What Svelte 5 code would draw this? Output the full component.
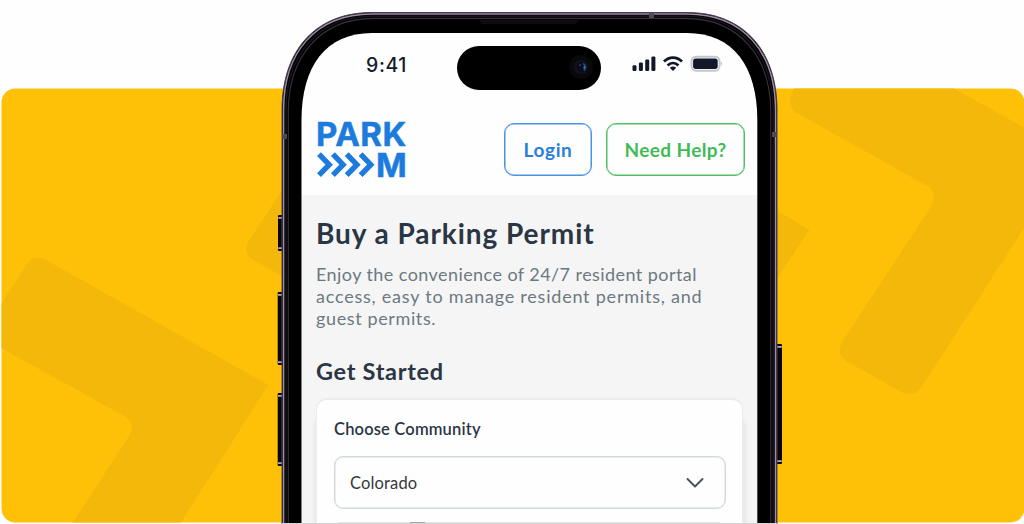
<script>
  const chevrons = [0, 13.9, 27.7, 41.6];
  const outer = 'M282 530V110C282 52 314 12.5 372 12.5H687C745 12.5 777 52 777 110V530Z';
  const rimLight = 'M283.6 530V110C283.6 53 315 14 372 14H687C744 14 775.5 53 775.5 110V530';
  const rimDark = 'M286 530V111C286 56 317 16.2 373 16.2H686C742 16.2 773.2 56 773.2 111V530';
  const rimInner = 'M288.3 530V112C288.3 58 319 18.4 374 18.4H685C740 18.4 770.8 58 770.8 112V530';
  const glass = 'M301.5 530V120C301.5 66 326 33 372 33H687C733 33 757.3 66 757.3 120V530Z';
  const buttons = [
    { x: 278, y: 215, h: 36 },
    { x: 277.7, y: 292, h: 73 },
    { x: 277.7, y: 393, h: 73 },
    { x: 776, y: 344, h: 120 }
  ];
</script>

<main class="hero">
  <svg class="scene" viewBox="0 0 1024 524" aria-hidden="true">
    <defs>
      <clipPath id="panel"><rect x="1.5" y="88.5" width="1023" height="434" rx="14" /></clipPath>
    </defs>
    <rect x="1.5" y="88.5" width="1023" height="434" rx="14" fill="#fec108" />
    <g clip-path="url(#panel)" fill="#f4b80a">
      <path d="M-10 321L27 264Q34 254 46 260L268.500 385L180 524H72L129 436Q136 424 126 417L-10 342Z" />
      <path d="M300 163L248 242Q243 252 252 259L320 298V163ZM740 189L809.500 230L740 334Z" />
      <path d="M796 86Q785 101 795 112L929 187Q937 194 932 205L842 342Q836 354 846 361L903 393Q914 397 921 388L1030 219V131L950 86Z" />
    </g>
    {#each buttons as b}
      <rect x={b.x} y={b.y} width="6" height={b.h} rx="1" fill="#08060b" />
      <path d="M{b.x + 0.3} {b.y + 2.8}h5.500M{b.x + 0.3} {b.y + b.h - 2.800}h5.500" stroke="#b3a3bb" stroke-width="1.800" />
    {/each}
    <path d={outer} fill="#000" />
    <g fill="none">
      <path d={outer} stroke="#4a4150" stroke-width="1" />
      <path d={rimLight} stroke="#9d8ba6" stroke-width="1.500" />
      <path d={rimDark} stroke="#17131a" stroke-width="1.500" />
      <path d={rimInner} stroke="#39323e" stroke-width="1.100" />
    </g>
    <path d="M282 134h5v5h-5zM772 132h5v5h-5zM649 12h5v6h-5z" fill="#514a56" />
    <path d="M479 20H579L576 24H482Z" fill="#0d0d0e" />
    <path d={glass} fill="#fefefe" />
  </svg>

  <section class="screen">
    <div class="status">
      <span class="time">9:41</span>
      <div class="island">
        <svg width="30" height="30" viewBox="0 0 30 30">
          <circle cx="15" cy="15" r="12" fill="#09090b" />
          <circle cx="15" cy="15" r="7.300" fill="#10111a" />
          <circle cx="15.500" cy="15" r="4.800" fill="#080b1b" />
          <path d="M17 11.500q4 2.500 1 7" stroke="#234b87" stroke-width="2" fill="none" />
          <circle cx="14" cy="13" r="1" fill="#33406a" />
          <circle cx="18.300" cy="15.500" r="1" fill="#4f7fc4" />
        </svg>
      </div>
      <svg class="indicators" width="92" height="18" viewBox="631 55 92 18">
        <g fill="#12172a">
          <rect x="632.500" y="65.300" width="4" height="5.700" rx="1.200" />
          <rect x="638.900" y="62.500" width="4" height="8.500" rx="1.200" />
          <rect x="645.200" y="59.600" width="4" height="11.400" rx="1.200" />
          <rect x="651.400" y="56.600" width="4" height="14.400" rx="1.200" />
        </g>
        <g fill="none" stroke="#12172a" stroke-width="2.800">
          <path d="M664 61.600C669.200 56.300 676.800 56.300 682 61.600" />
          <path d="M667.600 65.500C670.800 62.300 675.200 62.300 678.400 65.500" />
        </g>
        <path d="M669.800 67.700Q673 65.300 676.200 67.700L673 71Z" fill="#12172a" />
        <rect x="691.500" y="56.700" width="28" height="14" rx="4.500" fill="none" stroke="#c3c6ca" stroke-width="1.900" />
        <rect x="693.100" y="58.500" width="24.600" height="10.400" rx="2.600" fill="#12172a" />
        <path d="M720.800 61.200Q723.200 63.500 720.800 66Z" fill="#b9bbc0" />
      </svg>
    </div>

    <header class="bar">
      <div class="logo">
        <span>PARK</span>
        <div class="logo-row">
          <svg width="61" height="26" viewBox="316 152 61 26">
            {#each chevrons as dx}
              <path d="M{319 + dx} 154.200L{329.200 + dx} 164.700L{319 + dx} 175.200" fill="none" stroke="#1c7bdd" stroke-width="5.400" />
            {/each}
          </svg>
          <span>M</span>
        </div>
      </div>
      <button class="btn login"><span>Login</span></button>
      <button class="btn help"><span>Need Help?</span></button>
    </header>

    <div class="content">
      <h1><span>Buy a Parking Permit</span></h1>
      <p>
        <span class="l1">Enjoy the convenience of 24/7 resident portal</span>
        <span class="l2">access, easy to manage resident permits, and</span>
        <span class="l3">guest permits.</span>
      </p>
      <h2><span>Get Started</span></h2>
      <div class="card">
        <div class="label"><span>Choose Community</span></div>
        <div class="select">
          <span>Colorado</span>
          <svg width="18" height="12" viewBox="0 0 18 12"><path d="M1.500 2L9 9.500L16.500 2" fill="none" stroke="#46525f" stroke-width="1.900" stroke-linecap="round" stroke-linejoin="round" /></svg>
        </div>
        <div class="next"><i></i></div>
      </div>
    </div>
  </section>
  <div class="base"></div>
</main>

<style>
  :global(body) { margin: 0; background: #fefefe; overflow: hidden; }
  .hero {
    position: relative;
    width: 1024px;
    height: 524px;
    overflow: hidden;
    font-family: Lato, "Open Sans", sans-serif;
    color: #2b3644;
  }
  .scene { position: absolute; inset: 0; width: 1024px; height: 524px; }
  .screen {
    position: relative;
    box-sizing: border-box;
    width: 455px;
    height: 524px;
    margin-left: 302px;
    padding-top: 33px;
    display: flex;
    flex-direction: column;
    overflow: hidden;
    white-space: nowrap;
  }
  .status { height: 70px; display: flex; align-items: flex-start; flex: none; }
  .time {
    width: 90px;
    margin: 19px 0 0 64px;
    font: 500 19.500px/26px Inter, sans-serif;
    letter-spacing: 0.600px;
    color: #161b2b;
  }
  .island {
    width: 144px;
    height: 44px;
    margin: 13px 30px 0 1px;
    border-radius: 22px;
    background: #000;
    display: flex;
    align-items: center;
    justify-content: flex-end;
    box-sizing: border-box;
    padding: 0 5px 2px 0;
  }
  .indicators { margin-top: 22px; flex: none; }
  .bar {
    height: 92px;
    flex: none;
    display: flex;
    align-items: flex-start;
    padding: 19px 12px 0 14px;
    box-sizing: border-box;
  }
  .logo {
    flex: 1;
    font: 700 33px/24px Inter, sans-serif;
    color: #1c7bdd;
    -webkit-text-stroke: 0.500px #1c7bdd;
  }
  .logo > span { display: block; height: 30px; letter-spacing: 0.500px; }
  .logo-row { display: flex; align-items: center; }
  .logo-row span { margin-left: -1px; }
  .btn {
    height: 53px;
    margin-top: 1px;
    border: 1px solid;
    border-radius: 10px;
    background: transparent;
    padding: 0;
    font: 700 19px/24px Lato, "Open Sans", sans-serif;
  }
  .login { width: 88px; color: #2a7fdc; border-color: #4a93e2; box-shadow: inset 0 0 0 0.500px #4a93e2; margin-right: 14px; letter-spacing: 0.600px; }
  .help { width: 139px; color: #42ba58; border-color: #52bf66; box-shadow: inset 0 0 0 0.500px #52bf66; letter-spacing: 0.400px; }
  .content { flex: 1; background: #f5f5f6; padding: 21px 14px 0; }
  h1 { margin: 0; font-size: 28px; line-height: 34px; font-weight: 700; letter-spacing: 0.930px; }
  p { margin: 13px 0 0; font-size: 18px; line-height: 22px; color: #6d7980; }
  p span { display: block; width: max-content; }
  .l1 { letter-spacing: 0.430px; }
  .l2 { letter-spacing: 0.780px; }
  .l3 { letter-spacing: 0.620px; }
  h2 { margin: 28px 0 0; font-size: 23.500px; line-height: 28px; font-weight: 700; letter-spacing: 0.700px; }
  .card {
    height: 150px;
    margin-top: 13px;
    padding: 18px 17px 0 16px;
    border: 1px solid #ebecee;
    border-width: 2px 1px 0;
    border-radius: 11px 11px 0 0;
    background: #fefefe;
    box-shadow: -4px 17px 3px -1px #eaebed, 5px 17px 3px -1px #eaebed;
  }
  .label { font-size: 16.500px; line-height: 22px; font-weight: 600; margin-left: 1px; letter-spacing: 0.170px; }
  .select {
    height: 53px;
    box-sizing: border-box;
    margin: 16px -1px 0 1px;
    padding: 0 21px 0 15px;
    border: 1px solid #d3dada;
    box-shadow: inset 0 0 0 0.500px #d3dada;
    border-radius: 9px;
    display: flex;
    align-items: center;
    justify-content: space-between;
    font-size: 16.500px;
    letter-spacing: 0.150px;
    color: #35383f;
  }
  .select span { padding-top: 1px; }
  .next { height: 2px; margin: 13px 5px 0; background: #dfe6e7; }
  .next i { display: block; width: 15px; height: 2px; margin-left: 72px; background: #aaa3ae; }
  .base { position: absolute; left: 282px; top: 523px; width: 495px; height: 1px; background: #d5d2d8; }
</style>
